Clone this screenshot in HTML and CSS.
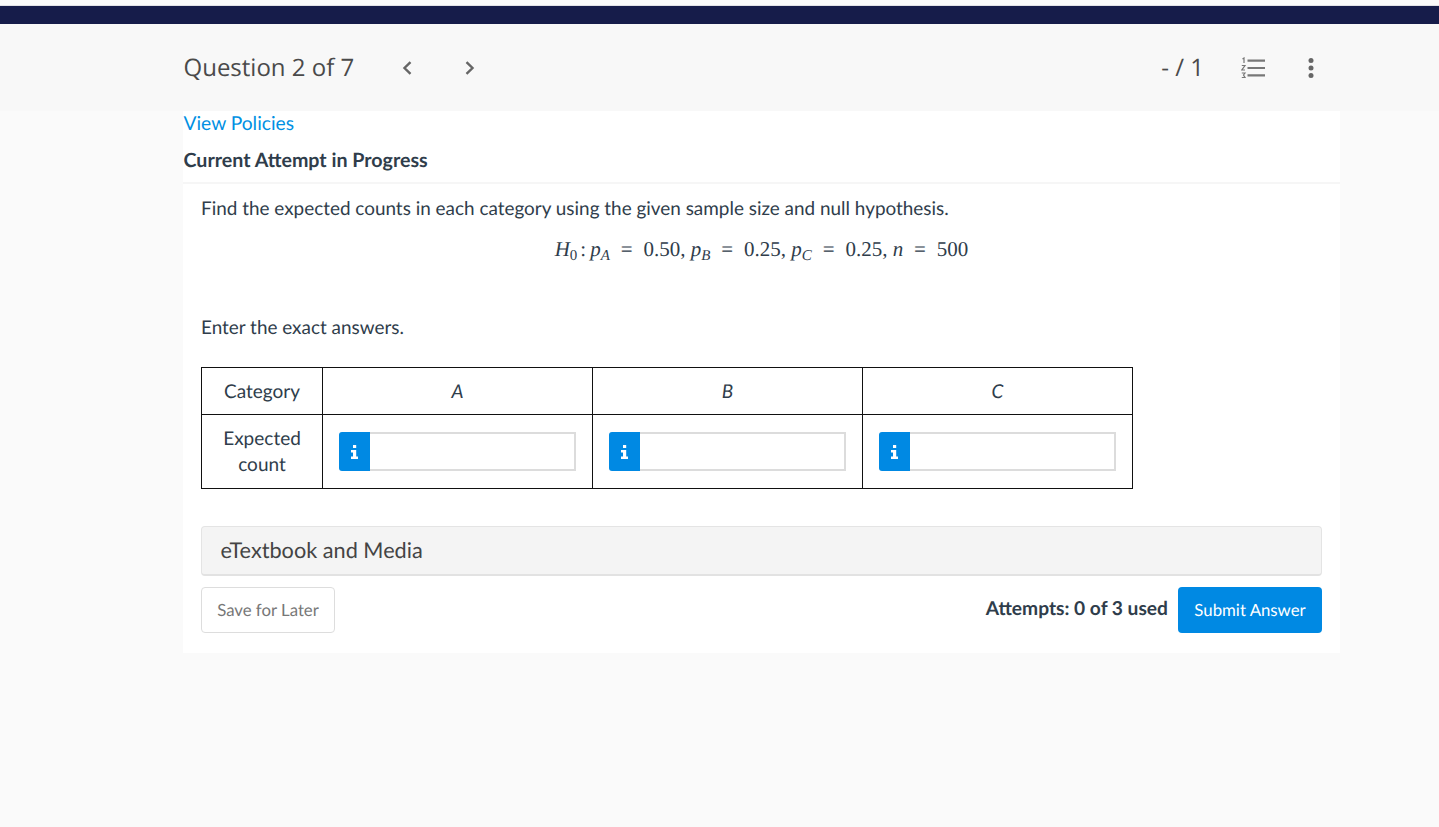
FILE: index.html
```html
<!DOCTYPE html>
<html lang="en">
<head>
<meta charset="utf-8">
<title>Question 2 of 7</title>
<link rel="stylesheet" href="styles.css">
</head>
<body>
<div class="topbar"></div>
<header class="qhead">
  <div class="qhead-inner">
    <div class="qnav">
      <span class="qtitle">Question 2 of 7</span>
      <svg class="chev chev-l" width="12" height="16" viewBox="0 0 12 16"><path d="M9.5 2.2 3.5 8 9.5 13.8" fill="none" stroke="#666" stroke-width="2.4"/></svg>
      <svg class="chev chev-r" width="12" height="16" viewBox="0 0 12 16"><path d="M2.5 2.2 8.5 8 2.5 13.8" fill="none" stroke="#666" stroke-width="2.4"/></svg>
    </div>
    <div class="qtools">
      <span class="score">- / 1</span>
      <svg class="listicon" width="24" height="22" viewBox="0 0 24 22">
        <path d="M6.5 3.7H24M6.5 11H24M6.5 18.3H24" stroke="#777" stroke-width="2.2" fill="none"/>
        <path d="M1.5 2 3 1V6M0.8 8.5H4L0.8 13H4M0.8 16H4L2.5 18L4 20.5H0.8" stroke="#777" stroke-width="1.2" fill="none"/>
      </svg>
      <svg class="dots" width="8" height="22" viewBox="0 0 8 22">
        <circle cx="4" cy="3.5" r="2.5" fill="#666"/><circle cx="4" cy="11" r="2.5" fill="#666"/><circle cx="4" cy="18.5" r="2.5" fill="#666"/>
      </svg>
    </div>
  </div>
</header>
<main class="card">
  <div class="policy">
    <a class="link" href="#">View Policies</a>
    <div class="attempt">Current Attempt in Progress</div>
  </div>
  <section class="question">
    <p class="prompt">Find the expected counts in each category using the given sample size and null hypothesis.</p>
    <p class="math"><i>H</i><span class="sub">0</span><span class="colon">:</span><i>p</i><i class="sub">A</i><span class="eq">=</span>0.50, <i>p</i><i class="sub">B</i><span class="eq">=</span>0.25, <i>p</i><i class="sub">C</i><span class="eq">=</span>0.25, <i>n</i><span class="eq">=</span>500</p>
    <p class="prompt enter">Enter the exact answers.</p>
    <table class="grid">
      <tr class="row-head">
        <td class="c0">Category</td>
        <td class="cx"><i>A</i></td>
        <td class="cx"><i>B</i></td>
        <td class="cx"><i>C</i></td>
      </tr>
      <tr class="row-input">
        <td class="c0">Expected count</td>
        <td class="cx"><div class="field"><span class="tag"><svg class="tag-icon" width="9" height="14" viewBox="0 0 9 14"><path d="M3 0h3.2v3H3zM1 5h5.2v6.6H8V14H1v-2.4h2V7.4H1z" fill="#fff"/></svg></span><span class="box"></span></div></td>
        <td class="cx"><div class="field"><span class="tag"><svg class="tag-icon" width="9" height="14" viewBox="0 0 9 14"><path d="M3 0h3.2v3H3zM1 5h5.2v6.6H8V14H1v-2.4h2V7.4H1z" fill="#fff"/></svg></span><span class="box"></span></div></td>
        <td class="cx"><div class="field"><span class="tag"><svg class="tag-icon" width="9" height="14" viewBox="0 0 9 14"><path d="M3 0h3.2v3H3zM1 5h5.2v6.6H8V14H1v-2.4h2V7.4H1z" fill="#fff"/></svg></span><span class="box"></span></div></td>
      </tr>
    </table>
    <div class="media">eTextbook and Media</div>
    <div class="actions">
      <button class="btn save">Save for Later</button>
      <div class="submit-group">
        <span class="attempts">Attempts: 0 of 3 used</span>
        <button class="btn submit">Submit Answer</button>
      </div>
    </div>
  </section>
</main>
</body>
</html>
```
FILE: styles.css
```css
* { box-sizing: border-box; }
html, body { margin: 0; padding: 0; }
body { height: 827px; overflow: hidden; background: #fafafa; padding-top: 5px; font-family: "Lato", sans-serif; color: #2f3d4b; text-rendering: geometricPrecision; }
.topbar { height: 19px; background: #161c4a; border-top: 1px solid #e2e2e6; }
.qhead { height: 87px; background: #f8f8f8; padding-left: 183.5px; padding-right: 99px; }
.qhead-inner { display: flex; justify-content: space-between; align-items: center; height: 87px; }
.qnav, .qtools { display: flex; align-items: center; }
.qtitle { font-family: "Open Sans", sans-serif; font-size: 24px; line-height: 30px; color: #4a4a4a; width: 217.5px; }
.chev { display: block; }
.chev-r { margin-left: 51px; }
.score { font-family: "Open Sans", sans-serif; font-size: 24px; line-height: 30px; color: #4a4a4a; margin-right: 37px; }
.listicon { display: block; margin-right: 42px; }
.dots { display: block; margin-right: 25px; }
.card { margin-left: 183px; width: 1157px; height: 542px; background: #fff; }
.policy { height: 73px; border-bottom: 2px solid #f6f6f6; padding: 1px 0 0 0.5px; }
.link { display: block; font-size: 19.2px; line-height: 24px; color: #0090e3; text-decoration: none; }
.attempt { font-size: 19.65px; line-height: 24px; font-weight: 700; margin-top: 13px; }
.question { padding: 0 18px; }
.prompt { margin: 0; font-size: 18.92px; line-height: 24px; padding-top: 13px; }
.math { margin: 0; padding-top: 16px; height: 95px; text-align: center; font-family: "Liberation Serif", serif; font-size: 21px; line-height: 24px; }
.sub { font-size: 15px; vertical-align: -4px; line-height: 0; }
.colon { margin: 0 4px 0 3px; }
.eq { margin: 0 10.9px; }
.enter { padding-top: 0; }
.grid { border-collapse: collapse; table-layout: fixed; width: 931px; margin-top: 27px; font-size: 19px; line-height: 26px; }
.grid td { border: 1px solid #111; text-align: center; padding: 0; }
.row-head td { padding-top: 1px; }
.c0 { width: 121px; padding-left: 16px; padding-right: 16px; }
.grid td.c0 { padding-left: 16px; padding-right: 16px; }
.cx { width: 270px; }
.row-head { height: 47px; }
.row-input { height: 74px; }
.field { display: flex; height: 39px; margin: 0 16px; }
.tag { width: 31px; display: flex; align-items: center; justify-content: center; background: #0089e3; border-radius: 3px 0 0 3px; }
.tag-icon { display: block; }
.box { flex: 1; background: #fff; border: 2px solid #dcdcdc; border-left: 0; }
.media { margin-top: 37px; height: 50px; background: #f4f4f4; border: 1px solid #e4e4e4; border-bottom: 2px solid #e2e2e2; border-radius: 4px; padding-left: 18.5px; font-size: 21.7px; line-height: 46px; color: #444; }
.actions { display: flex; justify-content: space-between; margin-top: 11px; }
.btn { font-family: "Lato", sans-serif; font-size: 16.8px; height: 46px; border-radius: 4px; cursor: pointer; text-rendering: geometricPrecision; }
.save { width: 134px; background: #fff; border: 1px solid #ddd; color: #777; padding: 0 0 2px; }
.submit-group { display: flex; align-items: center; }
.attempts { font-size: 19.2px; font-weight: 700; margin-right: 10px; margin-top: -3px; }
.submit { width: 144px; background: #0089e3; border: 0; color: #fff; padding: 0 0 2px; }
```
